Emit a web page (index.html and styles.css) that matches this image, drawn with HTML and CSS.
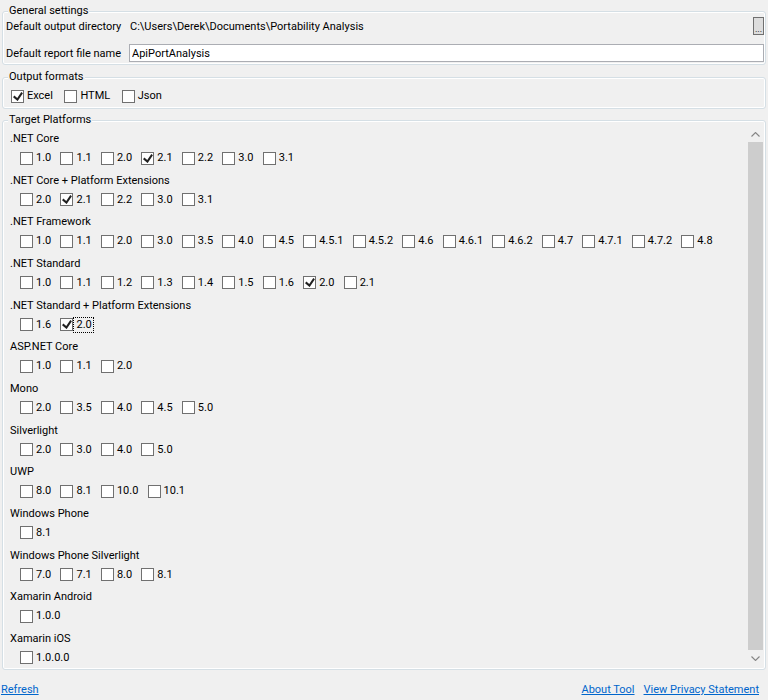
FILE: index.html
```html
<!DOCTYPE html>
<html lang="en">
<head>
    <meta charset="UTF-8">
    <title>Portability Analyzer Options</title>
    <link rel="stylesheet" href="styles.css">
</head>
<body>

<fieldset class="group general">
    <legend>General settings</legend>
    <div class="setting-row">
        <span class="setting-label">Default output directory</span>
        <div class="dir-value">
            <span class="dir-path">C:\Users\Derek\Documents\Portability Analysis</span>
            <button class="browse" type="button">...</button>
        </div>
    </div>
    <div class="setting-row file-row">
        <label class="setting-label" for="report-name">Default report file name</label>
        <input id="report-name" class="file-input" type="text" value="ApiPortAnalysis">
    </div>
</fieldset>

<fieldset class="group formats">
    <legend>Output formats</legend>
    <div class="format-row">
        <label class="cb format"><span class="box"><svg viewBox="0 0 10 9.1"><path d="M9.97 1.22L4.7 9.1H4.52L0 5.19L1.28 3.52L4.26 6.09L8.33 0Z"/></svg></span><span class="cb-text">Excel</span></label>
        <label class="cb format"><span class="box"></span><span class="cb-text">HTML</span></label>
        <label class="cb format"><span class="box"></span><span class="cb-text">Json</span></label>
    </div>
</fieldset>

<fieldset class="group targets">
    <legend>Target Platforms</legend>
    <div class="scroll-view">
        <div class="platform-list">

            <div class="platform">
                <div class="platform-name">.NET Core</div>
                <div class="versions">
                    <label class="cb"><span class="box"></span><span class="cb-text">1.0</span></label>
                    <label class="cb"><span class="box"></span><span class="cb-text">1.1</span></label>
                    <label class="cb"><span class="box"></span><span class="cb-text">2.0</span></label>
                    <label class="cb"><span class="box"><svg viewBox="0 0 10 9.1"><path d="M9.97 1.22L4.7 9.1H4.52L0 5.19L1.28 3.52L4.26 6.09L8.33 0Z"/></svg></span><span class="cb-text">2.1</span></label>
                    <label class="cb"><span class="box"></span><span class="cb-text">2.2</span></label>
                    <label class="cb"><span class="box"></span><span class="cb-text">3.0</span></label>
                    <label class="cb"><span class="box"></span><span class="cb-text">3.1</span></label>
                </div>
            </div>

            <div class="platform">
                <div class="platform-name">.NET Core + Platform Extensions</div>
                <div class="versions">
                    <label class="cb"><span class="box"></span><span class="cb-text">2.0</span></label>
                    <label class="cb"><span class="box"><svg viewBox="0 0 10 9.1"><path d="M9.97 1.22L4.7 9.1H4.52L0 5.19L1.28 3.52L4.26 6.09L8.33 0Z"/></svg></span><span class="cb-text">2.1</span></label>
                    <label class="cb"><span class="box"></span><span class="cb-text">2.2</span></label>
                    <label class="cb"><span class="box"></span><span class="cb-text">3.0</span></label>
                    <label class="cb"><span class="box"></span><span class="cb-text">3.1</span></label>
                </div>
            </div>

            <div class="platform">
                <div class="platform-name">.NET Framework</div>
                <div class="versions">
                    <label class="cb"><span class="box"></span><span class="cb-text">1.0</span></label>
                    <label class="cb"><span class="box"></span><span class="cb-text">1.1</span></label>
                    <label class="cb"><span class="box"></span><span class="cb-text">2.0</span></label>
                    <label class="cb"><span class="box"></span><span class="cb-text">3.0</span></label>
                    <label class="cb"><span class="box"></span><span class="cb-text">3.5</span></label>
                    <label class="cb"><span class="box"></span><span class="cb-text">4.0</span></label>
                    <label class="cb"><span class="box"></span><span class="cb-text">4.5</span></label>
                    <label class="cb"><span class="box"></span><span class="cb-text">4.5.1</span></label>
                    <label class="cb"><span class="box"></span><span class="cb-text">4.5.2</span></label>
                    <label class="cb"><span class="box"></span><span class="cb-text">4.6</span></label>
                    <label class="cb"><span class="box"></span><span class="cb-text">4.6.1</span></label>
                    <label class="cb"><span class="box"></span><span class="cb-text">4.6.2</span></label>
                    <label class="cb"><span class="box"></span><span class="cb-text">4.7</span></label>
                    <label class="cb"><span class="box"></span><span class="cb-text">4.7.1</span></label>
                    <label class="cb"><span class="box"></span><span class="cb-text">4.7.2</span></label>
                    <label class="cb"><span class="box"></span><span class="cb-text">4.8</span></label>
                </div>
            </div>

            <div class="platform">
                <div class="platform-name">.NET Standard</div>
                <div class="versions">
                    <label class="cb"><span class="box"></span><span class="cb-text">1.0</span></label>
                    <label class="cb"><span class="box"></span><span class="cb-text">1.1</span></label>
                    <label class="cb"><span class="box"></span><span class="cb-text">1.2</span></label>
                    <label class="cb"><span class="box"></span><span class="cb-text">1.3</span></label>
                    <label class="cb"><span class="box"></span><span class="cb-text">1.4</span></label>
                    <label class="cb"><span class="box"></span><span class="cb-text">1.5</span></label>
                    <label class="cb"><span class="box"></span><span class="cb-text">1.6</span></label>
                    <label class="cb"><span class="box"><svg viewBox="0 0 10 9.1"><path d="M9.97 1.22L4.7 9.1H4.52L0 5.19L1.28 3.52L4.26 6.09L8.33 0Z"/></svg></span><span class="cb-text">2.0</span></label>
                    <label class="cb"><span class="box"></span><span class="cb-text">2.1</span></label>
                </div>
            </div>

            <div class="platform">
                <div class="platform-name">.NET Standard + Platform Extensions</div>
                <div class="versions">
                    <label class="cb"><span class="box"></span><span class="cb-text">1.6</span></label>
                    <label class="cb focused"><span class="box"><svg viewBox="0 0 10 9.1"><path d="M9.97 1.22L4.7 9.1H4.52L0 5.19L1.28 3.52L4.26 6.09L8.33 0Z"/></svg></span><span class="cb-text">2.0</span></label>
                </div>
            </div>

            <div class="platform">
                <div class="platform-name">ASP.NET Core</div>
                <div class="versions">
                    <label class="cb"><span class="box"></span><span class="cb-text">1.0</span></label>
                    <label class="cb"><span class="box"></span><span class="cb-text">1.1</span></label>
                    <label class="cb"><span class="box"></span><span class="cb-text">2.0</span></label>
                </div>
            </div>

            <div class="platform">
                <div class="platform-name">Mono</div>
                <div class="versions">
                    <label class="cb"><span class="box"></span><span class="cb-text">2.0</span></label>
                    <label class="cb"><span class="box"></span><span class="cb-text">3.5</span></label>
                    <label class="cb"><span class="box"></span><span class="cb-text">4.0</span></label>
                    <label class="cb"><span class="box"></span><span class="cb-text">4.5</span></label>
                    <label class="cb"><span class="box"></span><span class="cb-text">5.0</span></label>
                </div>
            </div>

            <div class="platform">
                <div class="platform-name">Silverlight</div>
                <div class="versions">
                    <label class="cb"><span class="box"></span><span class="cb-text">2.0</span></label>
                    <label class="cb"><span class="box"></span><span class="cb-text">3.0</span></label>
                    <label class="cb"><span class="box"></span><span class="cb-text">4.0</span></label>
                    <label class="cb"><span class="box"></span><span class="cb-text">5.0</span></label>
                </div>
            </div>

            <div class="platform">
                <div class="platform-name">UWP</div>
                <div class="versions">
                    <label class="cb"><span class="box"></span><span class="cb-text">8.0</span></label>
                    <label class="cb"><span class="box"></span><span class="cb-text">8.1</span></label>
                    <label class="cb"><span class="box"></span><span class="cb-text">10.0</span></label>
                    <label class="cb"><span class="box"></span><span class="cb-text">10.1</span></label>
                </div>
            </div>

            <div class="platform">
                <div class="platform-name">Windows Phone</div>
                <div class="versions">
                    <label class="cb"><span class="box"></span><span class="cb-text">8.1</span></label>
                </div>
            </div>

            <div class="platform">
                <div class="platform-name">Windows Phone Silverlight</div>
                <div class="versions">
                    <label class="cb"><span class="box"></span><span class="cb-text">7.0</span></label>
                    <label class="cb"><span class="box"></span><span class="cb-text">7.1</span></label>
                    <label class="cb"><span class="box"></span><span class="cb-text">8.0</span></label>
                    <label class="cb"><span class="box"></span><span class="cb-text">8.1</span></label>
                </div>
            </div>

            <div class="platform">
                <div class="platform-name">Xamarin Android</div>
                <div class="versions">
                    <label class="cb"><span class="box"></span><span class="cb-text">1.0.0</span></label>
                </div>
            </div>

            <div class="platform">
                <div class="platform-name">Xamarin iOS</div>
                <div class="versions">
                    <label class="cb"><span class="box"></span><span class="cb-text">1.0.0.0</span></label>
                </div>
            </div>

        </div>
        <div class="scrollbar">
            <span class="arrow up"><svg viewBox="0 0 9 5"><path d="M0.5 4.5L4.5 0.5L8.5 4.5"/></svg></span>
            <span class="thumb"></span>
            <span class="arrow down"><svg viewBox="0 0 9 5"><path d="M0.5 0.5L4.5 4.5L8.5 0.5"/></svg></span>
        </div>
    </div>
</fieldset>

<div class="footer">
    <a href="#">Refresh</a>
    <div class="footer-links">
        <a href="#">About Tool</a>
        <a href="#">View Privacy Statement</a>
    </div>
</div>

</body>
</html>
```

FILE: styles.css
```css
body {
  margin: 0;
  padding-top: 4px;
  background: #f0f0f0;
  font-family: Roboto, "Liberation Sans", sans-serif;
  font-size: 11px;
  color: #000;
}

/* group boxes */
.group {
  margin: 0 2px;
  padding: 0;
  border: 1px solid #d5dfe5;
  border-radius: 3px;
  box-shadow: inset 0 0 0 1px #fff;
}
.group legend {
  margin-left: 5px;
  padding: 0 1px;
  line-height: 14px;
  background: #f0f0f0;
}

/* general settings */
.general {
  padding-bottom: 2px;
}
.setting-row {
  display: grid;
  grid-template-columns: 123px 1fr;
  align-items: center;
  height: 18px;
  margin-top: -1px;
  padding: 0 1px 0 3px;
}
.file-row {
  margin-top: 9px;
}
.dir-value {
  display: flex;
  align-items: center;
  justify-content: space-between;
  padding-left: 1px;
}
.browse {
  width: 11px;
  height: 18px;
  padding: 0;
  border: 1px solid #707070;
  background: #dddddd;
  font: inherit;
  font-size: 9px;
  line-height: 22px;
  color: #000;
}
.file-input {
  box-sizing: border-box;
  width: 100%;
  height: 18px;
  margin: 0;
  padding: 0 2px;
  border: 1px solid #abadb3;
  background: #fff;
  font: inherit;
  color: #000;
}

/* checkboxes */
.cb {
  display: inline-flex;
  align-items: center;
  height: 16px;
  margin-right: 9.2px;
}
.box {
  box-sizing: border-box;
  width: 13px;
  height: 13px;
  border: 1px solid #707070;
  background: #fff;
  display: flex;
  align-items: center;
  justify-content: center;
}
.box svg {
  width: 10px;
  height: 9px;
  fill: #212121;
}
.cb-text {
  padding-left: 3px;
  line-height: 16px;
}
.focused .cb-text {
  padding-right: 2px;
  outline: 1px dotted #000;
  outline-offset: -1px;
}

/* output formats */
.formats {
  margin-top: 5px;
  padding: 0 0 4px 0;
}
.format-row {
  display: flex;
  margin-top: 4px;
  padding-left: 8px;
}
.format {
  margin-right: 11.5px;
}

/* target platforms */
.targets {
  margin-top: 4px;
  padding: 0 0 1px 0;
}
.scroll-view {
  display: flex;
  height: 541px;
  overflow: hidden;
}
.platform-list {
  flex: 1;
  padding-top: 4px;
}
.platform {
  height: 41.67px;
}
.platform-name {
  line-height: 16px;
  padding-left: 7px;
}
.versions {
  display: flex;
  margin-top: 3px;
  padding-left: 17px;
}

.scrollbar {
  width: 17px;
  margin-right: 1px;
  display: flex;
  flex-direction: column;
  align-items: center;
}
.arrow {
  display: flex;
  align-items: center;
  justify-content: center;
  width: 17px;
}
.arrow svg {
  width: 9px;
  height: 5px;
  fill: none;
  stroke: #858585;
  stroke-width: 1.1;
}
.arrow.up {
  height: 15px;
}
.thumb {
  width: 15px;
  height: 508px;
  background: #cdcdcd;
}
.arrow.down {
  flex: 1;
  align-items: flex-end;
  padding-bottom: 7px;
}

/* footer links */
.footer {
  display: flex;
  justify-content: space-between;
  margin-top: 12px;
  padding: 0 9px 0 1px;
  line-height: 16px;
}
.footer-links {
  display: flex;
  gap: 9px;
}
.footer a {
  color: #0066cc;
}
```
